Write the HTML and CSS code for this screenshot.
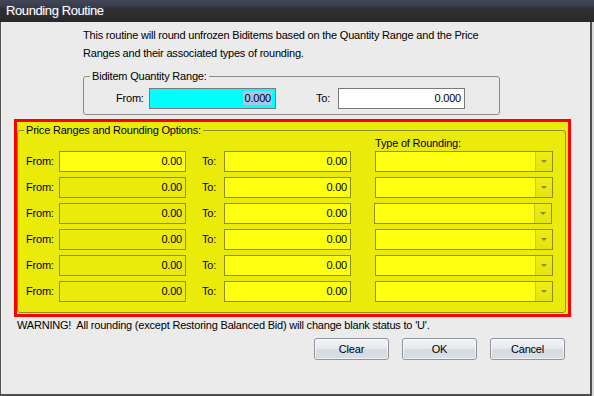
FILE: index.html
```html
<!DOCTYPE html>
<html>
<head>
<meta charset="utf-8">
<link rel="stylesheet" href="styles.css">
</head>
<body>
<div class="window">
  <div class="titlebar">Rounding Routine</div>
  <div class="frame">
    <div class="client">
      <p class="intro">This routine will round unfrozen Biditems based on the Quantity Range and the Price<br>Ranges and their associated types of rounding.</p>

      <fieldset class="qty">
        <legend>Biditem Quantity Range:</legend>
        <div class="qty-row">
          <span class="lbl qty-from">From:</span>
          <div class="field grey-border cyan"><span class="sel">0.000</span></div>
          <span class="lbl qty-to">To:</span>
          <div class="field grey-border white">0.000</div>
        </div>
      </fieldset>

      <div class="highlight">
        <fieldset class="price">
          <legend>Price Ranges and Rounding Options:</legend>
          <div class="head">Type of Rounding:</div>
          <div class="grid">
            <span class="lbl">From:</span><div class="field y on">0.00</div><span class="lbl to">To:</span><div class="field y on">0.00</div><span></span><div class="combo"><div class="combo-text"></div><div class="combo-btn"><span class="arrow"></span></div></div>

            <span class="lbl">From:</span><div class="field y off">0.00</div><span class="lbl to">To:</span><div class="field y on">0.00</div><span></span><div class="combo"><div class="combo-text"></div><div class="combo-btn"><span class="arrow"></span></div></div>

            <span class="lbl">From:</span><div class="field y off">0.00</div><span class="lbl to">To:</span><div class="field y on">0.00</div><span></span><div class="combo shift"><div class="combo-text"></div><div class="combo-btn"><span class="arrow"></span></div></div>

            <span class="lbl">From:</span><div class="field y off">0.00</div><span class="lbl to">To:</span><div class="field y on">0.00</div><span></span><div class="combo"><div class="combo-text"></div><div class="combo-btn"><span class="arrow"></span></div></div>

            <span class="lbl">From:</span><div class="field y off">0.00</div><span class="lbl to">To:</span><div class="field y on">0.00</div><span></span><div class="combo"><div class="combo-text"></div><div class="combo-btn"><span class="arrow"></span></div></div>

            <span class="lbl">From:</span><div class="field y off">0.00</div><span class="lbl to">To:</span><div class="field y on">0.00</div><span></span><div class="combo"><div class="combo-text"></div><div class="combo-btn"><span class="arrow"></span></div></div>
          </div>
        </fieldset>
      </div>

      <p class="warning">WARNING!&nbsp; All rounding (except Restoring Balanced Bid) will change blank status to 'U'.</p>

      <div class="buttons">
        <button class="btn">Clear</button>
        <button class="btn">OK</button>
        <button class="btn">Cancel</button>
      </div>
    </div>
    <div class="edge"></div>
  </div>
</div>
</body>
</html>
```

FILE: styles.css
```css
html, body {
  margin: 0;
  padding: 0;
  background: #2a2a2a;
}

.window {
  width: 594px;
  height: 396px;
  display: flex;
  flex-direction: column;
  overflow: hidden;
  font-family: "Liberation Sans", Arial, sans-serif;
  font-size: 11px;
  letter-spacing: -0.2px;
  color: #000;
}

.titlebar {
  height: 22px;
  line-height: 21px;
  padding-left: 6px;
  color: #fff;
  font-size: 13px;
  letter-spacing: -0.4px;
  background: linear-gradient(#41465a 0px, #3a3e4b 6px, #2e2f35 9px, #292929 22px);
  text-shadow: 0 0 2px rgba(180, 200, 255, 0.35);
  flex: none;
}

.frame {
  flex: 1;
  display: flex;
  min-height: 0;
}

.client {
  width: 589px;
  background: #ebebeb;
  border-left: 1px solid #555;
  border-right: 2px solid #4e4e4e;
  border-bottom: 2px solid #4e4e4e;
}

.edge {
  width: 2px;
  background: #d8d8d8;
}

.intro {
  margin: 0;
  padding: 4px 0 0 82px;
  line-height: 18px;
}

/* Quantity group */
.qty {
  margin: 7px 0 0 82px;
  width: 415px;
  padding: 0 0 5px 0;
  border: 1px solid #8b8b8b;
  border-radius: 3px;
}

.qty legend {
  margin-left: 6px;
  padding: 0 2px;
  line-height: 14px;
}

.qty-row {
  display: flex;
  align-items: center;
  padding: 5px 0 0 32px;
}

.lbl {
  line-height: 13px;
}

.qty-from {
  width: 33px;
}

.qty-to {
  margin-left: 40px;
  width: 22px;
}

.field {
  box-sizing: border-box;
  width: 127px;
  height: 21px;
  line-height: 19px;
  text-align: right;
  padding-right: 3px;
}

.grey-border {
  border: 1px solid #7a7a7a;
}

.cyan {
  background: #00ffff;
}

.white {
  background: #fff;
}

.sel {
  background: #a6c6ec;
  padding: 1px 1px;
}

/* Highlight (red annotation) */
.highlight {
  margin: 4px 0 0 13px;
  width: 551px;
  border: 3px solid #ff0000;
  background: #ebeb0b;
}

.price {
  margin: 2px 2px 1px 0;
  padding: 0 0 10px 0;
  border: 1px solid #8d8d2c;
  border-radius: 3px;
}

.price legend {
  margin-left: 6px;
  padding: 0 2px;
  line-height: 13px;
}

.head {
  padding-left: 357px;
  line-height: 13px;
  margin-bottom: 1px;
}

.grid {
  display: grid;
  grid-template-columns: 33px 127px 38px 127px 24px 178px;
  grid-auto-rows: 21px;
  row-gap: 5px;
  align-items: center;
  padding-left: 8px;
}

.grid .to {
  padding-left: 16px;
}

.field.y {
  border: 1px solid #8d8d2c;
}

.field.on {
  background: #ffff12;
}

.field.off {
  background: #ebeb0b;
}

.combo {
  box-sizing: border-box;
  width: 178px;
  height: 21px;
  border: 1px solid #8d8d2c;
  display: flex;
  background: #ffff12;
}

.combo.shift {
  margin-left: -1px;
}

.combo-text {
  flex: 1;
}

.combo-btn {
  width: 16px;
  border-left: 1px solid #c9c91a;
  background: linear-gradient(#eeee14, #e4e40e);
  display: flex;
  align-items: center;
  justify-content: center;
}

.arrow {
  width: 0;
  height: 0;
  border-left: 3px solid transparent;
  border-right: 3px solid transparent;
  border-top: 3px solid #8a8a30;
}

.warning {
  margin: 0;
  padding-left: 16px;
  line-height: 14px;
  margin-top: 1px;
}

.buttons {
  display: flex;
  gap: 13px;
  padding-left: 313px;
  margin-top: 6px;
}

.btn {
  box-sizing: border-box;
  width: 75px;
  height: 22px;
  padding: 0;
  font-family: "Liberation Sans", Arial, sans-serif;
  font-size: 11px;
  letter-spacing: -0.2px;
  color: #000;
  border: 1px solid #8e949a;
  border-radius: 3px;
  background: linear-gradient(#f3f5f7 0%, #e6eaee 45%, #d5dbe0 55%, #d9dfe4 100%);
  box-shadow: inset 0 0 0 1px rgba(255, 255, 255, 0.6);
}
```
